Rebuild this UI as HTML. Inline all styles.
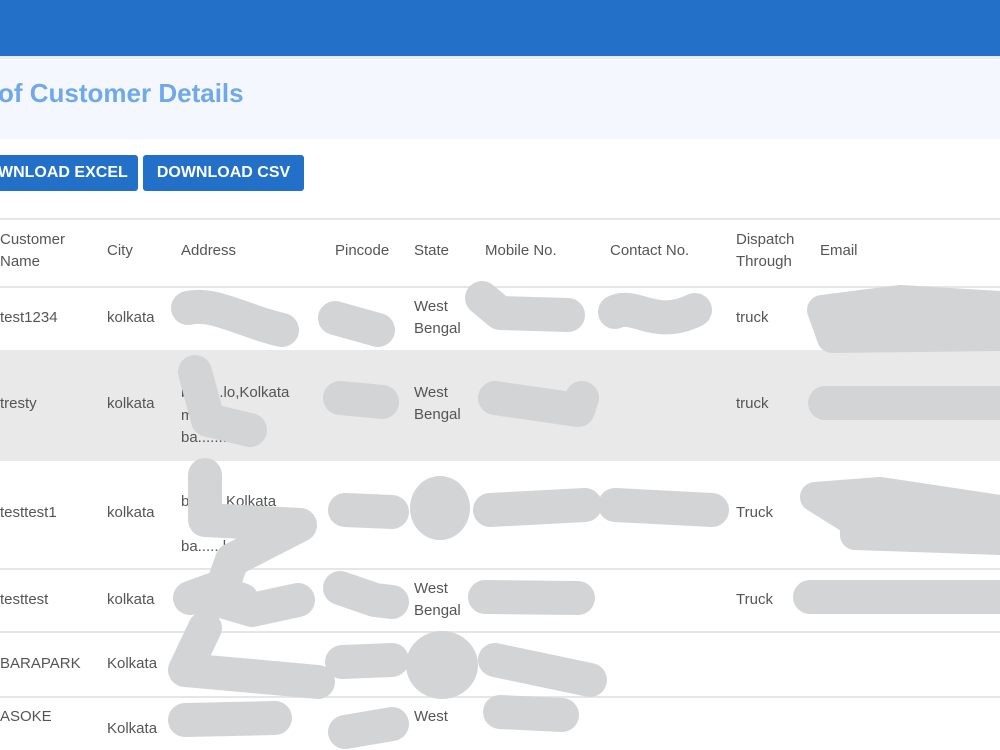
<!DOCTYPE html>
<html><head><meta charset="utf-8"><style>
body{margin:0;width:1000px;height:750px;overflow:hidden;background:#fff;font-family:"Liberation Sans",sans-serif;position:relative;color:#555}
.a{position:absolute;white-space:nowrap}
.t{font-size:15px;line-height:22px}
.btn{position:absolute;top:155px;height:36px;background:#2370c9;color:#fff;font-weight:bold;font-size:16px;line-height:36px;border-radius:3px;text-align:center;white-space:nowrap}
.hl{position:absolute;left:0;width:1000px;height:2px;background:#e6e6e6}
</style></head><body>
<div class="a" style="left:0;top:0;width:1000px;height:56px;background:#2370c9"></div>
<div class="a" style="left:0;top:56px;width:1000px;height:3px;background:#e3ecf7"></div>
<div class="a" style="left:0;top:60px;width:1000px;height:79px;background:#f5f7fe"></div>
<div class="a" style="left:-2px;top:78px;font-size:26px;font-weight:bold;color:#6fa9e9">of Customer Details</div>
<div class="btn" style="left:-10px;width:148px;text-align:left;text-indent:8px">WNLOAD EXCEL</div>
<div class="btn" style="left:143px;width:161px">DOWNLOAD CSV</div>
<div class="a" style="left:0;top:350px;width:1000px;height:111px;background:#e9e9e9"></div>
<div class="hl" style="top:218px"></div>
<div class="hl" style="top:286px"></div>
<div class="hl" style="top:568px"></div>
<div class="hl" style="top:631px"></div>
<div class="hl" style="top:696px"></div>
<div class="t a" style="left:0;top:229px;white-space:normal;width:80px">Customer Name</div>
<div class="t a" style="left:107px;top:240px">City</div>
<div class="t a" style="left:181px;top:240px">Address</div>
<div class="t a" style="left:335px;top:240px">Pincode</div>
<div class="t a" style="left:414px;top:240px">State</div>
<div class="t a" style="left:485px;top:240px">Mobile No.</div>
<div class="t a" style="left:610px;top:240px">Contact No.</div>
<div class="t a" style="left:736px;top:229px;white-space:normal;width:70px">Dispatch Through</div>
<div class="t a" style="left:820px;top:240px">Email</div>

<div class="t a" style="left:0;top:307px">test1234</div><div class="t a" style="left:107px;top:307px">kolkata</div>
<div class="t a" style="left:414px;top:296px">West<br>Bengal</div><div class="t a" style="left:736px;top:307px">truck</div>
<div class="t a" style="left:0;top:393px">tresty</div><div class="t a" style="left:107px;top:393px">kolkata</div>
<div class="t a" style="left:414px;top:382px">West<br>Bengal</div><div class="t a" style="left:736px;top:393px">truck</div>
<div class="t a" style="left:181px;top:382px;line-height:22.5px">bara...lo,Kolkata<br>maru..<br>ba.......kata</div>
<div class="t a" style="left:0;top:502px">testtest1</div><div class="t a" style="left:107px;top:502px">kolkata</div>
<div class="t a" style="left:181px;top:491px;line-height:22.5px">ba...lo,Kolkata<br>&nbsp;<br>ba......kata</div>
<div class="t a" style="left:736px;top:502px">Truck</div>
<div class="t a" style="left:0;top:589px">testtest</div><div class="t a" style="left:107px;top:589px">kolkata</div>
<div class="t a" style="left:414px;top:578px">West<br>Bengal</div><div class="t a" style="left:736px;top:589px">Truck</div>
<div class="t a" style="left:0;top:653px">BARAPARK</div><div class="t a" style="left:107px;top:653px">Kolkata</div>
<div class="t a" style="left:0;top:706px">ASOKE</div><div class="t a" style="left:107px;top:718px">Kolkata</div>
<div class="t a" style="left:414px;top:706px">West</div>

<svg class="a" style="left:0;top:0" width="1000" height="750" fill="none" stroke="#d3d4d5" stroke-linecap="round" stroke-linejoin="round">
<g stroke-width="34">
<path d="M188 308 C215 302 245 322 282 330"/><path d="M335 318 L378 330"/>
<path d="M482 298 L500 313 L568 315"/><path d="M615 312 C635 302 655 330 695 310"/>
<path d="M195 372 L208 420 L250 430"/><path d="M340 398 L382 402"/><path d="M495 398 L578 410 L582 398"/>
<path d="M205 475 L205 520 L300 525 L232 560 L218 600 L252 610 L298 600"/><path d="M345 510 L392 512"/>
<path d="M490 510 L585 505"/><path d="M615 505 L712 510"/>
<path d="M190 598 L212 590 L242 600"/><path d="M205 628 L185 670 L318 682"/><path d="M340 588 L375 600 L392 602"/>
<path d="M485 597 L578 598"/><path d="M342 662 L392 660"/><path d="M495 660 L590 680"/>
<path d="M185 720 L275 718"/><path d="M345 732 L392 724"/><path d="M500 712 L562 715"/>
<path d="M810 597 L1000 597"/><path d="M825 403 L1000 403"/>
</g>
<ellipse cx="440" cy="508" rx="30" ry="32" fill="#d3d4d5" stroke="none"/>
<ellipse cx="442" cy="665" rx="36" ry="34" fill="#d3d4d5" stroke="none"/>
<path d="M822 310 L832 338 L1000 336 L1000 306 L900 300 Z" fill="#d3d4d5" stroke="#d3d4d5" stroke-width="30"/>
<path d="M815 497 L855 522 L855 535 L1000 540 L1000 510 L880 492 Z" fill="#d3d4d5" stroke="#d3d4d5" stroke-width="30"/>
</svg>
</body></html>
